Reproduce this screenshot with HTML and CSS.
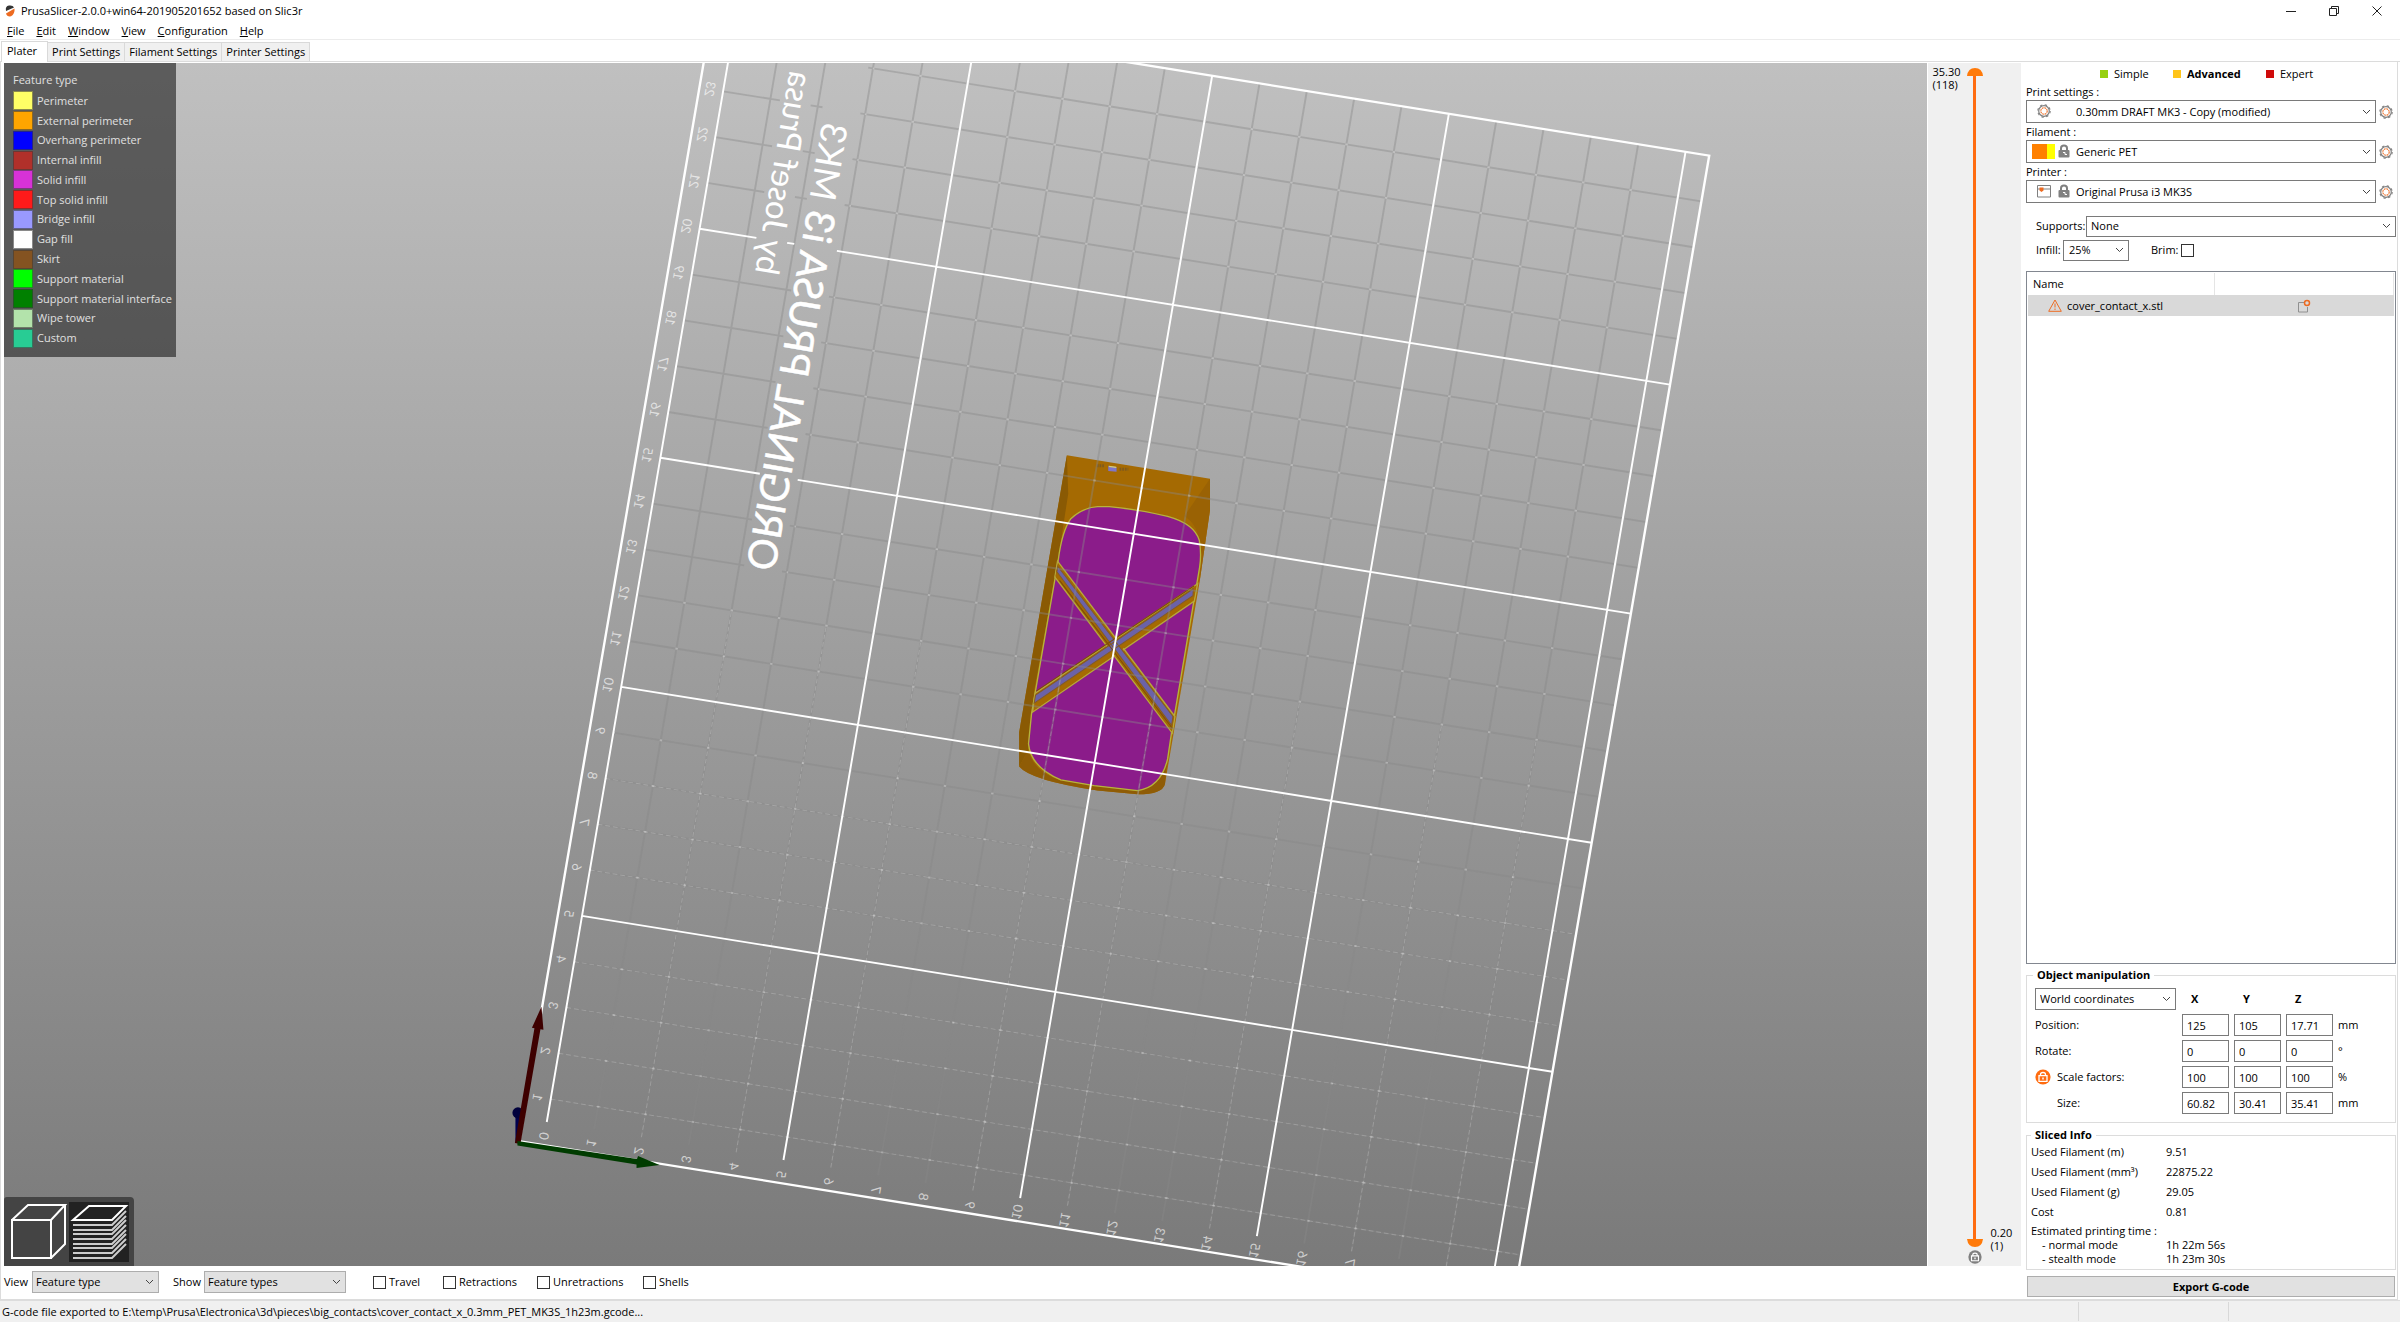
FILE: index.html
```html
<!DOCTYPE html>
<html lang="en">
<head>
<meta charset="utf-8">
<title>PrusaSlicer-2.0.0+win64-201905201652 based on Slic3r</title>
<link rel="stylesheet" href="styles.css">
</head>
<body>
<svg class="defs" aria-hidden="true">
  <symbol id="gear" viewBox="0 0 14 14">
    <circle cx="7" cy="7" r="5.3" fill="none" stroke="#808080" stroke-width="1.2"/>
    <circle cx="7" cy="7" r="6.2" fill="none" stroke="#808080" stroke-width="1.1" stroke-dasharray="2.4 2.47"/>
    <circle cx="7" cy="7" r="3.2" fill="none" stroke="#ed6b21" stroke-width="1.1" stroke-dasharray="1.8 .7"/>
  </symbol>
  <symbol id="lock" viewBox="0 0 12 14">
    <path d="M3 7V4.2Q3 1.5 6 1.5T9 4.2V7" fill="none" stroke="#808080" stroke-width="2"/>
    <rect x=".5" y="6" width="11" height="7.5" rx="1" fill="#808080"/>
    <path d="M5 8.5h2v2h2" fill="none" stroke="#fff"/>
  </symbol>
  <symbol id="round-lock" viewBox="0 0 16 16">
    <circle cx="8" cy="8" r="7.6" fill="currentColor"/>
    <path d="M5.500 7V5.500Q5.500 3.500 8 3.500T10.500 5.500V7" fill="none" stroke="#fff" stroke-width="1.300"/>
    <path d="M4 6.700h8v5.600H4z" fill="none" stroke="#fff" stroke-width="1.300"/>
    <path d="M8 8.500v2" stroke="#fff" stroke-width="1.500"/>
  </symbol>
</svg>

<header class="titlebar">
  <svg class="app-icon" viewBox="0 0 10 12"><path d="M1 6Q0 1 4 .5Q8 0 9 2.500z" fill="#333"/><path d="M1 8.500L9.500 3.500Q10 9 6 11.300Q2 12 1 8.500z" fill="#ed6b21"/></svg>
  <span class="title">PrusaSlicer-2.0.0+win64-201905201652 based on Slic3r</span>
  <div class="window-buttons">
    <button aria-label="Minimize"><svg viewBox="0 0 12 12"><path d="M1 6.500h10"/></svg></button>
    <button aria-label="Restore"><svg viewBox="0 0 12 12"><path d="M1.500 3.500h7v7h-7zM3.500 3.500v-2h7v7h-2"/></svg></button>
    <button aria-label="Close"><svg viewBox="0 0 12 12"><path d="M1.500 1.500l9 9M10.500 1.500l-9 9"/></svg></button>
  </div>
</header>
<nav class="menubar">
  <a href="#"><u>F</u>ile</a><a href="#"><u>E</u>dit</a><a href="#"><u>W</u>indow</a><a href="#"><u>V</u>iew</a><a href="#"><u>C</u>onfiguration</a><a href="#"><u>H</u>elp</a>
</nav>
<div class="tabs" role="tablist">
  <button role="tab" class="tab active" aria-selected="true">Plater</button><button role="tab" class="tab">Print Settings</button><button role="tab" class="tab">Filament Settings</button><button role="tab" class="tab">Printer Settings</button>
</div>

<main class="page">
  <section class="preview">
    <div class="stage">
      <div class="canvas">
        <svg class="scene" viewBox="4 63 1924 1202" preserveAspectRatio="xMinYMin slice">
          <!-- sliced object -->
          <g transform="translate(980 430) scale(.3333)">
            <path d="M258 75L687 145V240L655 460L552 1060Q545 1091 470 1091L350 1080Q150 1050 115 1008V905Z" fill="#a56a02"/>
            <path d="M258 75L115 905V1008L142 960L160 780L232 385L262 190Z" fill="#8a5a04"/>
            <path d="M115 1008L142 960Q160 1025 240 1050L470 1082Q540 1070 560 985L552 1060Q545 1091 470 1091L350 1080Q150 1050 115 1008Z" fill="#8f5c06"/>
            <path d="M687 145V240L655 460L660 350Q650 280 610 258Z" fill="#9a6204"/>
            <path d="M232 390Q244 300 270 265Q305 232 350 229L385 229Q480 238 560 258Q640 280 655 330Q662 370 656 410L572 905L560 985Q540 1070 470 1080L340 1065L240 1048Q150 1010 143 940L152 850Z" fill="#8b1c8a" stroke="#b6b43c" stroke-width="4"/>
            <path d="M222 440L230 392L582 858L574 908ZM650 460L640 512L155 845L163 788Z" fill="#a56a02" stroke="#b6a83c" stroke-width="4"/>
            <path d="M224 436L231 400L578 862L573 902ZM645 468L638 508L160 838L165 796Z" fill="#a56a02"/>
            <path d="M228 424L231 408L576 858L572 884ZM637 475L636 496L160 818L164 794Z" fill="#6b62a8" stroke="#835a28" stroke-width="3"/>
            <path d="M236 450L574 893M640 466L166 782" fill="none" stroke="#7c4d08" stroke-width="3"/>
            <path d="M348 106h22M416 117h26" stroke="#7d5a20" stroke-width="9" stroke-dasharray="5 3"/>
            <path d="M382 106l25 4v14l-25-2z" fill="#7f76c8"/><path d="M384 108l22 3" stroke="#d8d070" stroke-width="4"/>
          </g>

          <!-- print bed, one unit per centimetre -->
          <g transform="matrix(47.3 7.6 7.83 -45.77 542.4 1144)" fill="none">
            <path class="grid-minor" d="M1 .5V25M2 .5V25M3 .5V25M4 .5V25M6 .5V25M7 .5V25M8 .5V25M9 .5V25M11 .5V25M12 .5V25M13 .5V25M14 .5V25M16 .5V25M17 .5V25M18 .5V25M19 .5V25
              M0 1H20.5M0 2H20.5M0 3H20.5M0 4H20.5M0 6H20.5M0 7H20.5M0 8H20.5M0 9H20.5M0 11H20.5M0 12H20.5
              M0 13H2.100M2.900 13H20.500M0 14H2.100M2.900 14H20.500M0 16H2.100M2.900 16H20.500M0 17H2.100M2.900 17H20.500M0 18H2.100M2.900 18H20.500M0 19H2.100M2.900 19H20.500
              M0 21H1.200M1.850 21H2.100M2.900 21H20.500M0 22H1.200M1.850 22H2.100M2.900 22H20.500M0 23H1.200M1.850 23H2.100M2.900 23H20.500M2.900 24H20.500"/>
            <path class="grid-dashes" d="M2 .5V12M4 .5V12M6 .5V12M9 .5V12M11 .5V12M14 .5V12M17 .5V12M19 .5V12M0 1H20.500M0 2H20.5M0 3H20.5M0 4H20.5M0 6H20.500M0 7H20.500M0 8H20.500"/>
            <path class="grid-dots" d="M0 1H20.5M0 2H20.5M0 3H20.5M0 4H20.5M0 6H20.5M0 7H20.5M0 8H20.5M0 9H20.5M0 11H20.5M0 12H20.5M3 13H20.5M3 14H20.5M3 16H20.5M3 17H20.5M3 18H20.5M3 19H20.5M3 21H20.5M3 22H20.5M3 23H20.5M3 24H20.5"/>
            <path class="grid-major" d="M0 .5V25M5 .5V25M10 .5V25M15 .5V25M20 .5V25M0 5H20.5M0 10H20.5M0 15H2.100M2.900 15H20.500M0 20H1.200M1.850 20H2M2.900 20H20.500"/>
            <path class="grid-edge" d="M-.5 0V25H20.500V0z"/>
          </g>

          <!-- lettering on the bed, seen from below -->
          <g transform="matrix(.1687 -.9857 -.9857 -.1687 542.4 1144)" fill="#fff">
            <text class="bed-title" x="603" y="-103">ORIGINAL PRUSA i3 <tspan class="bed-model">MK3</tspan></text>
            <text class="bed-author" x="895" y="-62">by Josef Prusa</text>
            <g class="ruler">
              <text x="46" y="18">1</text><text x="93" y="18">2</text><text x="139" y="18">3</text><text x="186" y="18">4</text><text x="232" y="18">5</text><text x="279" y="18">6</text><text x="325" y="18">7</text><text x="372" y="18">8</text><text x="418" y="18">9</text><text x="464" y="18">10</text><text x="511" y="18">11</text><text x="557" y="18">12</text><text x="604" y="18">13</text><text x="650" y="18">14</text><text x="697" y="18">15</text><text x="743" y="18">16</text><text x="789" y="18">17</text><text x="836" y="18">18</text><text x="882" y="18">19</text><text x="929" y="18">20</text><text x="975" y="18">21</text><text x="1022" y="18">22</text><text x="1068" y="18">23</text>
              <text x="9" y="5">0</text><text x="10" y="-43">1</text><text x="10" y="-91">2</text><text x="10" y="-139">3</text><text x="11" y="-187">4</text><text x="11" y="-235">5</text><text x="12" y="-283">6</text><text x="12" y="-331">7</text><text x="13" y="-379">8</text><text x="13" y="-426">9</text><text x="14" y="-474">10</text><text x="14" y="-522">11</text><text x="14" y="-570">12</text><text x="15" y="-618">13</text><text x="15" y="-666">14</text><text x="16" y="-714">15</text><text x="16" y="-762">16</text><text x="17" y="-810">17</text>
            </g>
          </g>

          <!-- axes -->
          <path d="M515 1142V1114h6l-2 28z" fill="#00004e"/><circle cx="517.500" cy="1112" r="5.500" fill="#00003c"/>
          <path d="M514.500 1142L534 1027.500L531.500 1027L541 1006L543 1029L540 1028.500L520 1143z" fill="#3e0000"/>
          <path d="M517 1140L636.500 1158L637.500 1155L659 1164L636 1167L636 1163.500L517 1144.500z" fill="#003c00"/>
        </svg>

        <div class="legend">
          <h2>Feature type</h2>
          <ul>
            <li><i class="c-perimeter"></i>Perimeter</li>
            <li><i class="c-external"></i>External perimeter</li>
            <li><i class="c-overhang"></i>Overhang perimeter</li>
            <li><i class="c-internal"></i>Internal infill</li>
            <li><i class="c-solid"></i>Solid infill</li>
            <li><i class="c-top"></i>Top solid infill</li>
            <li><i class="c-bridge"></i>Bridge infill</li>
            <li><i class="c-gap"></i>Gap fill</li>
            <li><i class="c-skirt"></i>Skirt</li>
            <li><i class="c-support"></i>Support material</li>
            <li><i class="c-interface"></i>Support material interface</li>
            <li><i class="c-wipe"></i>Wipe tower</li>
            <li><i class="c-custom"></i>Custom</li>
          </ul>
        </div>

        <div class="view-switch">
          <button aria-label="3D editor view"><svg viewBox="0 0 60 60"><path d="M3 18h39v38H3zM3 18L19 3h37L42 18M56 3v39L42 56"/></svg></button>
          <button class="on" aria-label="Preview"><svg viewBox="0 0 60 60"><path d="M4 18h39L57 4H20z"/><path class="slices" d="M4 23h39L57 9M4 28h39L57 14M4 32h39L57 18M4 37h39L57 23M4 42h39L57 28M4 46h39L57 32M4 51h39L57 37M4 56h39L57 42"/></svg></button>
        </div>
      </div>

      <div class="layers">
        <div class="layer-top">35.30<br>(118)</div>
        <div class="track">
          <svg class="handle" viewBox="0 0 16 8"><path d="M0 8Q1 0 8 0t8 8z"/></svg>
          <div class="rail"></div>
          <svg class="handle" viewBox="0 0 16 8"><path d="M0 0h16q-1 8-8 8T0 0z"/></svg>
          <svg class="track-lock"><use href="#round-lock"/></svg>
        </div>
        <div class="layer-bottom">0.20<br>(1)</div>
      </div>
    </div>

    <div class="view-options">
      <label for="view">View</label>
      <select id="view" class="flat view-select"><option>Feature type</option></select>
      <label for="show">Show</label>
      <select id="show" class="flat show-select"><option>Feature types</option></select>
      <label class="check travel"><input type="checkbox">Travel</label>
      <label class="check retractions"><input type="checkbox">Retractions</label>
      <label class="check unretractions"><input type="checkbox">Unretractions</label>
      <label class="check"><input type="checkbox">Shells</label>
    </div>
  </section>

  <aside class="sidebar">
    <div class="modes">
      <button class="simple"><i></i>Simple</button><button class="advanced"><i></i>Advanced</button><button class="expert"><i></i>Expert</button>
    </div>

    <div class="preset">
      <label for="print">Print settings :</label>
      <div class="preset-row">
        <div class="combo"><select id="print"><option>0.30mm DRAFT MK3 - Copy (modified)</option></select><svg class="combo-icon"><use href="#gear"/></svg></div>
        <button aria-label="Edit print settings"><svg><use href="#gear"/></svg></button>
      </div>
    </div>
    <div class="preset">
      <label for="filament">Filament :</label>
      <div class="preset-row">
        <div class="combo"><select id="filament"><option>Generic PET</option></select><span class="swatch"></span><svg class="combo-lock"><use href="#lock"/></svg></div>
        <button aria-label="Edit filament"><svg><use href="#gear"/></svg></button>
      </div>
    </div>
    <div class="preset">
      <label for="printer">Printer :</label>
      <div class="preset-row">
        <div class="combo"><select id="printer"><option>Original Prusa i3 MK3S</option></select><svg class="combo-icon" viewBox="0 0 14 14"><path d="M.5 1.500h13v11.500H.5zM.5 5h13" fill="none" stroke="#808080"/><path d="M2.500 3.500h4v3l-2 1.500l-2-1.500z" fill="#ed6b21"/></svg><svg class="combo-lock"><use href="#lock"/></svg></div>
        <button aria-label="Edit printer"><svg><use href="#gear"/></svg></button>
      </div>
    </div>

    <div class="quick supports"><label for="supports">Supports:</label><select id="supports"><option>None</option></select></div>
    <div class="quick infill"><label for="infill">Infill:</label><select id="infill"><option>25%</option></select><label class="brim" for="brim">Brim:</label><input id="brim" type="checkbox"></div>

    <div class="objects">
      <table>
        <thead><tr><th class="name">Name</th><th></th></tr></thead>
        <tbody><tr>
          <td class="name"><div class="object"><svg class="warn" viewBox="0 0 14 13"><path d="M7 1L13.300 12.300H.7zM7 4.500v4M7 9.500v1.500"/></svg>cover_contact_x.stl</div></td>
          <td><svg class="edit" viewBox="0 0 14 14"><path d="M7 3.500H1.500V13h9V8" fill="none" stroke="#909090"/><circle cx="10" cy="4" r="2.500" fill="none" stroke="#ed6b21" stroke-width="1.500"/></svg></td>
        </tr></tbody>
      </table>
    </div>

    <fieldset class="manipulation">
      <legend>Object manipulation</legend>
      <div class="axes-grid">
        <select class="coords" aria-label="Coordinate system"><option>World coordinates</option></select><b>X</b><b>Y</b><b>Z</b><span></span>
        <span class="wide">Position:</span><input aria-label="Position X" value="125"><input aria-label="Position Y" value="105"><input aria-label="Position Z" value="17.71"><span>mm</span>
        <span class="wide">Rotate:</span><input aria-label="Rotate X" value="0"><input aria-label="Rotate Y" value="0"><input aria-label="Rotate Z" value="0"><span>°</span>
        <svg class="scale-lock"><use href="#round-lock"/></svg><span>Scale factors:</span><input aria-label="Scale X" value="100"><input aria-label="Scale Y" value="100"><input aria-label="Scale Z" value="100"><span>%</span>
        <span></span><span>Size:</span><input aria-label="Size X" value="60.82"><input aria-label="Size Y" value="30.41"><input aria-label="Size Z" value="35.41"><span>mm</span>
      </div>
    </fieldset>

    <fieldset class="sliced">
      <legend>Sliced Info</legend>
      <dl>
        <dt>Used Filament (m)</dt><dd>9.51</dd>
        <dt>Used Filament (mm³)</dt><dd>22875.22</dd>
        <dt>Used Filament (g)</dt><dd>29.05</dd>
        <dt>Cost</dt><dd>0.81</dd>
      </dl>
      <dl class="times">
        <dt>Estimated printing time :</dt><dd></dd>
        <dt class="sub">- normal mode</dt><dd>1h 22m 56s</dd>
        <dt class="sub">- stealth mode</dt><dd>1h 23m 30s</dd>
      </dl>
    </fieldset>

    <button class="export">Export G-code</button>
  </aside>
</main>

<footer class="statusbar">
  <span class="message">G-code file exported to E:\temp\Prusa\Electronica\3d\pieces\big_contacts\cover_contact_x_0.3mm_PET_MK3S_1h23m.gcode...</span>
  <span class="cell"></span><span class="cell"></span>
</footer>
</body>
</html>
```
FILE: styles.css
```css
* { box-sizing: border-box; }
body {
  margin: 0;
  height: 100vh;
  display: flex;
  flex-direction: column;
  background: #fff;
  color: #000;
  font: 11px/14px "Open Sans", "Noto Sans", sans-serif;
  overflow: hidden;
}
button, select, input { font: inherit; color: inherit; margin: 0; }
button { border: 0; padding: 0; background: none; }
svg { display: block; flex: none; }
.defs { position: absolute; width: 0; height: 0; }

.titlebar { display: flex; align-items: center; height: 21px; padding-left: 5px; flex: none; }
.app-icon { width: 10px; height: 12px; margin-right: 6px; }
.window-buttons { margin-left: auto; margin-right: 2px; display: flex; }
.window-buttons button { width: 43px; height: 20px; display: grid; place-items: center; }
.window-buttons svg { width: 12px; height: 12px; fill: none; stroke: #222; }

.menubar { display: flex; gap: 12px; height: 19px; padding: 3px 7px 0; border-bottom: 1px solid #ececec; flex: none; }
.menubar a { color: inherit; text-decoration: none; }

.tabs { display: flex; align-items: flex-end; height: 22px; padding-left: 1px; border-bottom: 1px solid #dcdcdc; flex: none; }
.tab { height: 19px; padding: 0 4px; background: #f0f0f0; border: 1px solid #d9d9d9; border-width: 1px 1px 0 0; }
.tab.active { height: 21px; padding: 0 10px 2px 5px; background: #fff; margin-bottom: -1px; border-left-width: 1px; }

.page { flex: 1; min-height: 0; display: flex; border: 1px solid #dcdcdc; border-top: 0; margin-right: 2px; }
.preview { flex: 1; min-width: 0; display: flex; flex-direction: column; padding: 1px 0 0 3px; }
.stage { flex: 1; min-height: 0; display: flex; }
.canvas { position: relative; flex: 1; min-width: 0; overflow: hidden; background: linear-gradient(#c0c0c0, #7a7a7a); }
.scene { position: absolute; inset: 0; width: 100%; height: 100%; }
.grid-minor { stroke: #888; stroke-opacity: .42; stroke-width: .04; }
.grid-dashes { stroke: #fff; stroke-opacity: .2; stroke-width: .02; stroke-dasharray: .1 .06; }
.grid-dots { stroke: #fff; stroke-opacity: .3; stroke-width: .04; stroke-dasharray: .05 .95; stroke-dashoffset: .02; }
.grid-major { stroke: #fff; stroke-width: .04; }
.grid-edge { stroke: #fff; stroke-width: .05; }
.bed-title { font: 40px Lato, sans-serif; stroke: #fff; stroke-width: .5px; }
.bed-model { font-size: 36px; stroke-width: 0; }
.bed-author { font: 33px Lato, sans-serif; }
.ruler { font: 13px Lato, sans-serif; text-anchor: middle; fill-opacity: .65; }

.legend { position: absolute; left: 0; top: 0; width: 172px; height: 294px; padding: 10px 9px; background: rgba(30, 30, 30, .62); color: #e0e0e0; }
.legend h2 { margin: 0 0 4px; font: inherit; }
.legend ul { margin: 0; padding: 0; list-style: none; display: grid; grid-template-rows: repeat(13, 1fr); height: 257px; }
.legend li { display: flex; align-items: center; gap: 4px; white-space: nowrap; }
.legend i { width: 20px; height: 19px; border: 1px solid rgba(60, 60, 60, .6); }
.c-perimeter { background: #ffff66; }
.c-external { background: #ffa500; }
.c-overhang { background: #0000ff; }
.c-internal { background: #b1302a; }
.c-solid { background: #d732d7; }
.c-top { background: #ff1a1a; }
.c-bridge { background: #9999ff; }
.c-gap { background: #fff; }
.c-skirt { background: #845321; }
.c-support { background: #00ff00; }
.c-interface { background: #008000; }
.c-wipe { background: #b3e3ab; }
.c-custom { background: #28cc94; }

.view-switch { position: absolute; left: 0; bottom: 0; display: flex; padding: 5px 5px 4px; background: #444; border-radius: 3px 4px 0 0; }
.view-switch button { width: 60px; height: 60px; }
.view-switch .on { background: #222; }
.view-switch svg { width: 60px; height: 60px; fill: none; stroke: #fff; stroke-width: 2px; }
.view-switch .slices { stroke: #ccc; stroke-width: 2px; }

.layers { width: 94px; display: flex; justify-content: center; background: #f0f0f0; border-left: 1px solid #fff; margin-right: 1px; line-height: 13px; }
.layer-top { width: 34px; padding-top: 2px; }
.track { display: flex; flex-direction: column; align-items: center; width: 16px; padding: 5px 0 2px; }
.handle { width: 16px; height: 8px; fill: #ff7a0a; }
.rail { flex: 1; width: 3px; background: #ff6c10; }
.track-lock { width: 14px; height: 14px; margin-top: 3px; color: #808080; }
.layer-bottom { width: 34px; padding: 0 0 14px 8px; align-self: flex-end; }

.view-options { display: flex; align-items: center; height: 33px; padding-bottom: 1px; }
select {
  appearance: none;
  height: 22px;
  padding: 0 20px 0 4px;
  border: 1px solid #7a7a7a;
  border-radius: 0;
  background: #fff url("data:image/svg+xml,%3Csvg xmlns='http://www.w3.org/2000/svg' width='9' height='6'%3E%3Cpath d='M1 1l3.500 3.500L8 1' fill='none' stroke='%23444'/%3E%3C/svg%3E") no-repeat right 4px center;
}
select.flat { background-color: #e1e1e1; border-color: #adadad; padding-left: 3px; }
.view-options label[for="view"] { width: 28px; }
.view-select { width: 127px; margin-right: 14px; }
.view-options label[for="show"] { width: 31px; }
.show-select { width: 142px; margin-right: 27px; }
input[type="checkbox"] { appearance: none; width: 13px; height: 13px; border: 1px solid #333; background: #fff; flex: none; }
.check { display: flex; align-items: center; gap: 3px; }
.travel { width: 70px; }
.retractions { width: 94px; }
.unretractions { width: 106px; }

.sidebar { width: 375px; display: flex; flex-direction: column; padding: 4px 1px 1px 4px; flex: none; }
.modes { display: flex; height: 16px; padding-left: 74px; margin-bottom: 1px; }
.modes button { display: flex; align-items: center; gap: 6px; text-align: left; }
.modes i { width: 8px; height: 8px; }
.simple { width: 73px; }
.simple i { background: #96d010; }
.advanced { width: 93px; font-weight: bold; }
.advanced i { background: #ffc419; }
.expert i { background: #cf0a0a; }

.preset { display: flex; flex-direction: column; height: 40px; }
.preset label { height: 17px; line-height: 18px; }
.preset-row { display: flex; align-items: center; }
.combo { position: relative; flex: 1; }
.combo select { width: 100%; height: 23px; padding-left: 49px; display: block; }
.combo-icon { position: absolute; left: 11px; top: 4px; width: 14px; height: 14px; }
.combo-lock { position: absolute; left: 32px; top: 4px; width: 12px; height: 14px; }
.swatch { position: absolute; left: 6px; top: 4px; width: 23px; height: 15px; background: #ff8000; border-right: 8px solid #ff0; }
.preset-row button { width: 20px; display: grid; place-items: center; }
.preset-row button svg { width: 14px; height: 14px; }

.quick { display: flex; align-items: center; padding-left: 10px; height: 24px; }
.supports { margin-top: 11px; }
.supports label { width: 50px; }
.supports select { flex: 1; height: 21px; }
.infill label { width: 27px; }
.infill select { width: 66px; height: 21px; padding-left: 5px; }
.infill .brim { width: 30px; margin-left: 22px; }

.objects { flex: 1; border: 1px solid #828790; margin-top: 9px; padding: 1px; }
.objects table { width: 100%; border-collapse: collapse; table-layout: fixed; }
.objects th { height: 22px; padding: 0 5px; font-weight: normal; text-align: left; border-right: 1px solid #e5e5e5; }
.objects .name { width: 186px; }
.objects tbody td { height: 21px; padding: 0; background: #d9d9d9; }
.object { display: flex; align-items: center; gap: 5px; padding-left: 20px; }
.warn { width: 14px; height: 13px; fill: none; stroke: #ed6b21; }
.edit { width: 14px; height: 14px; margin-left: 83px; }

fieldset { margin: 4px 0 0; min-width: 0; border: 1px solid #dcdcdc; }
legend { font-weight: bold; padding: 0 4px; }
.manipulation { padding: 6px 8px 8px; }
.manipulation legend { margin-left: -2px; }
.axes-grid { display: grid; grid-template-columns: 17px 120px 47px 47px 47px 1fr; column-gap: 5px; row-gap: 4px; align-items: center; }
.axes-grid > * { min-width: 0; }
.coords { grid-column: span 2; width: 141px; }
.wide { grid-column: span 2; }
.axes-grid b { padding-left: 9px; }
.axes-grid input { width: 100%; height: 22px; padding: 0 4px; border: 1px solid #7a7a7a; }
.scale-lock { width: 16px; height: 16px; color: #ff6c10; }

.sliced { padding: 0 4px 3px; margin-top: 5px; }
.sliced dl { margin: 0; display: grid; grid-template-columns: 135px 1fr; line-height: 20px; }
.sliced dl.times { line-height: 14px; padding-top: 2px; }
.sliced dd { margin: 0; }
.sliced .sub { padding-left: 11px; }

.export { height: 21px; margin: 6px 1px 1px; background: #e1e1e1; border: 1px solid #adadad; font-weight: bold; flex: none; }

.statusbar { display: flex; align-items: center; height: 22px; padding-left: 2px; background: #f0f0f0; border-top: 1px solid #dcdcdc; flex: none; }
.message { flex: 1; }
.cell { width: 150px; height: 19px; border-left: 1px solid #d8d8d8; }
.cell:last-child { width: 172px; }
```
